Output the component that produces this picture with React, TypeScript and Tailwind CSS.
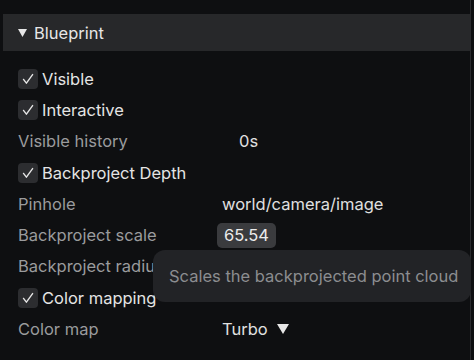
import React from "react";

function Check() {
  return (
    <span className="w-5 h-5 rounded-[4px] bg-[#2c2d30] flex items-center justify-center shrink-0">
      <svg width="14" height="14" viewBox="0 0 14 14" fill="none">
        <path d="M2.5 7.4 L5.4 11.2 L11.6 2.6" stroke="#e6e6e6" strokeWidth="1.4" strokeLinecap="round" strokeLinejoin="round" />
      </svg>
    </span>
  );
}

function CheckRow({ label }: { label: string }) {
  return (
    <div className="h-[31.25px] flex items-center gap-[4px] pl-[15px]">
      <Check />
      <span className="text-[#e4e4e4]">{label}</span>
    </div>
  );
}

function PropRow({ label, children }: { label: string; children?: React.ReactNode }) {
  return (
    <div className="h-[31.25px] flex items-center pl-[15px]">
      <span className="w-[204px] shrink-0 text-[#9a9b9d] whitespace-nowrap overflow-hidden">{label}</span>
      <div className="flex items-center text-[#e0e0e0]">{children}</div>
    </div>
  );
}

export default function App() {
  return (
    <div
      className="w-[474px] h-[360px] bg-[#0e0f11] relative overflow-hidden text-[16.5px]"
      style={{ fontFamily: "Inter, 'Noto Sans', sans-serif" }}
    >
      <div className="ml-[3px] w-[468px] h-full border-r border-[#2a2b2e]">
        <div className="h-[14px]" />
        <div className="h-[37px] bg-[#27282a] flex items-center pl-[15px] gap-[7px] pt-[1px]">
          <svg width="9" height="8" viewBox="0 0 9 8">
            <path d="M0 0 H9 L4.5 8 Z" fill="#e6e6e6" />
          </svg>
          <span className="text-[#e6e6e6]">Blueprint</span>
        </div>
        <div className="pt-[12.5px]">
          <CheckRow label="Visible" />
          <CheckRow label="Interactive" />
          <PropRow label="Visible history">
            <span className="pl-[17px]">0s</span>
          </PropRow>
          <CheckRow label="Backproject Depth" />
          <PropRow label="Pinhole">
            <span>world/camera/image</span>
          </PropRow>
          <PropRow label="Backproject scale">
            <span className="-ml-[5px] h-[25px] px-[7px] rounded-[5px] bg-[#3a3b3e] flex items-center text-[#ececec]">65.54</span>
          </PropRow>
          <PropRow label="Backproject radius" />
          <CheckRow label="Color mapping" />
          <PropRow label="Color map">
            <span>Turbo</span>
            <svg className="ml-[9px]" width="12" height="10" viewBox="0 0 12 10">
              <path d="M0 0 H12 L6 10 Z" fill="#e6e6e6" />
            </svg>
          </PropRow>
        </div>
      </div>
      <div className="absolute left-[153px] top-[250px] w-[318px] h-[52px] rounded-[12px] bg-[#222326] flex items-center pl-[16px] text-[#8c8d90] whitespace-nowrap">
        Scales the backprojected point cloud
      </div>
    </div>
  );
}
